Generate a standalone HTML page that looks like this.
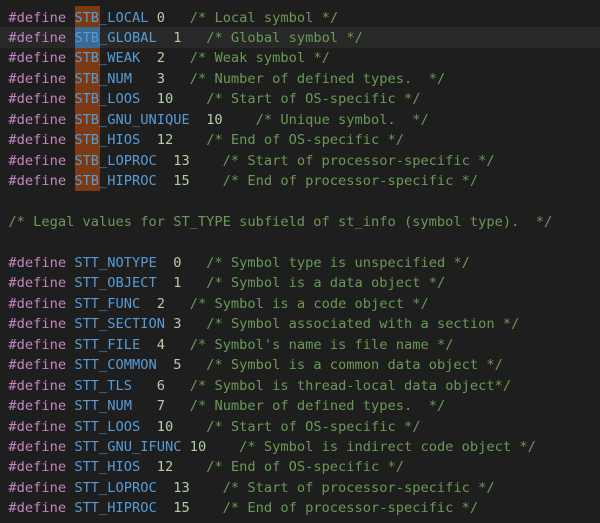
<!DOCTYPE html>
<html><head><meta charset="utf-8"><style>
html,body{margin:0;padding:0;background:#1e1e1e;width:600px;height:523px;overflow:hidden}
.hl{position:absolute;left:75px;width:25px;top:6px;height:185px;background:#7b3a14}
.cur{position:absolute;left:0;width:600px;top:27px;height:20.5px;background:#282828}
.sel{position:absolute;left:75px;width:25px;top:27px;height:20.5px;background:#3b6a94}
pre{position:absolute;left:8.4px;top:7.5px;margin:0;font-family:"DejaVu Sans Mono","Liberation Mono",monospace;font-size:13.7px;line-height:20.46px;color:#d4d4d4}
.k{color:#c586c0}.n{color:#569cd6}.d{color:#b5cea8}.c{color:#6a9955}
</style></head><body>
<div class="hl"></div><div class="cur"></div><div class="sel"></div>
<pre><span class="k">#define</span> <span class="n">STB_LOCAL</span> <span class="d">0</span>   <span class="c">/* Local symbol */</span>
<span class="k">#define</span> <span class="n">STB_GLOBAL</span>  <span class="d">1</span>   <span class="c">/* Global symbol */</span>
<span class="k">#define</span> <span class="n">STB_WEAK</span>  <span class="d">2</span>   <span class="c">/* Weak symbol */</span>
<span class="k">#define</span> <span class="n">STB_NUM</span>   <span class="d">3</span>   <span class="c">/* Number of defined types.  */</span>
<span class="k">#define</span> <span class="n">STB_LOOS</span>  <span class="d">10</span>    <span class="c">/* Start of OS-specific */</span>
<span class="k">#define</span> <span class="n">STB_GNU_UNIQUE</span>  <span class="d">10</span>    <span class="c">/* Unique symbol.  */</span>
<span class="k">#define</span> <span class="n">STB_HIOS</span>  <span class="d">12</span>    <span class="c">/* End of OS-specific */</span>
<span class="k">#define</span> <span class="n">STB_LOPROC</span>  <span class="d">13</span>    <span class="c">/* Start of processor-specific */</span>
<span class="k">#define</span> <span class="n">STB_HIPROC</span>  <span class="d">15</span>    <span class="c">/* End of processor-specific */</span>

<span class="c">/* Legal values for ST_TYPE subfield of st_info (symbol type).  */</span>

<span class="k">#define</span> <span class="n">STT_NOTYPE</span>  <span class="d">0</span>   <span class="c">/* Symbol type is unspecified */</span>
<span class="k">#define</span> <span class="n">STT_OBJECT</span>  <span class="d">1</span>   <span class="c">/* Symbol is a data object */</span>
<span class="k">#define</span> <span class="n">STT_FUNC</span>  <span class="d">2</span>   <span class="c">/* Symbol is a code object */</span>
<span class="k">#define</span> <span class="n">STT_SECTION</span> <span class="d">3</span>   <span class="c">/* Symbol associated with a section */</span>
<span class="k">#define</span> <span class="n">STT_FILE</span>  <span class="d">4</span>   <span class="c">/* Symbol's name is file name */</span>
<span class="k">#define</span> <span class="n">STT_COMMON</span>  <span class="d">5</span>   <span class="c">/* Symbol is a common data object */</span>
<span class="k">#define</span> <span class="n">STT_TLS</span>   <span class="d">6</span>   <span class="c">/* Symbol is thread-local data object*/</span>
<span class="k">#define</span> <span class="n">STT_NUM</span>   <span class="d">7</span>   <span class="c">/* Number of defined types.  */</span>
<span class="k">#define</span> <span class="n">STT_LOOS</span>  <span class="d">10</span>    <span class="c">/* Start of OS-specific */</span>
<span class="k">#define</span> <span class="n">STT_GNU_IFUNC</span> <span class="d">10</span>    <span class="c">/* Symbol is indirect code object */</span>
<span class="k">#define</span> <span class="n">STT_HIOS</span>  <span class="d">12</span>    <span class="c">/* End of OS-specific */</span>
<span class="k">#define</span> <span class="n">STT_LOPROC</span>  <span class="d">13</span>    <span class="c">/* Start of processor-specific */</span>
<span class="k">#define</span> <span class="n">STT_HIPROC</span>  <span class="d">15</span>    <span class="c">/* End of processor-specific */</span></pre>
</body></html>
